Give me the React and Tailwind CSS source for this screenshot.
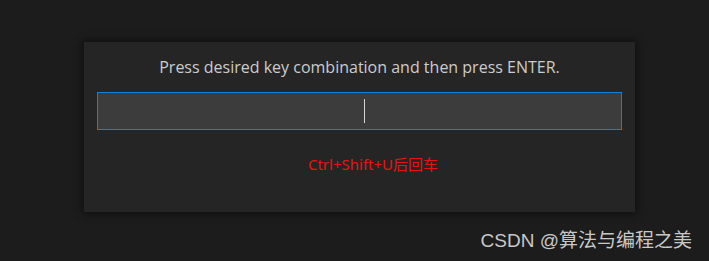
export default function App() {
  return (
    <div className="relative w-[709px] h-[261px] bg-[#1c1c1c] overflow-hidden">
      <div className="pt-[42px] pl-[84px]">
        {/* Keybinding widget */}
        <div className="w-[551px] h-[170px] bg-[#252526] shadow-[0_0_8px_2px_rgba(0,0,0,0.45)] px-[13px] pt-[13px] flex flex-col">
          <div
            className="h-[24px] text-center text-[16px] leading-[24px] text-[#cccccc]"
            style={{ fontFamily: '"Open Sans", "Noto Sans", sans-serif' }}
          >
            Press desired key combination and then press ENTER.
          </div>
          <div className="mt-[13px] h-[38px] bg-[#3c3c3c] ring-1 ring-inset ring-[#0a84e0] flex items-center justify-center">
            <div className="w-px h-[24px] bg-[#d4d4d4] ml-[9px]" />
          </div>
          <div
            className="mt-[24px] pl-[27px] text-center text-[15px] leading-[20px] text-[#ee1111]"
            style={{ fontFamily: '"Noto Sans", "Noto Sans CJK SC", sans-serif' }}
          >
            Ctrl+Shift+U后回车
          </div>
        </div>
      </div>
      <div
        className="absolute right-[17px] top-[229px] text-[19px] leading-[24px] text-[#c8c8c8]"
        style={{ fontFamily: '"Liberation Sans", "Noto Sans CJK SC", sans-serif' }}
      >
        CSDN @算法与编程之美
      </div>
    </div>
  );
}
